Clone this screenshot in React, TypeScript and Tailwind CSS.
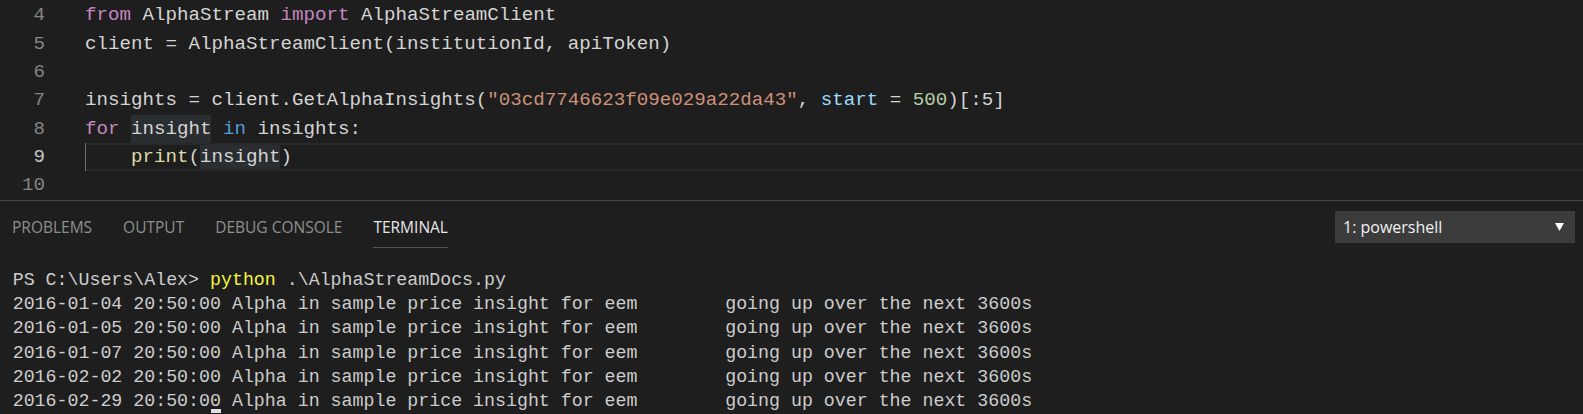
import React from 'react';

const MONO = "font-['Liberation_Mono','DejaVu_Sans_Mono',monospace]";
const UI = "font-['Open_Sans','Noto_Sans',sans-serif]";

const kw = 'text-[#c586c0]';
const blue = 'text-[#569cd6]';
const str = 'text-[#ce9178]';
const param = 'text-[#9cdcfe]';
const num = 'text-[#b5cea8]';
const fn = 'text-[#dcdcaa]';
const hl = 'bg-[#2b2e31]';

type Line = { n: number; body: React.ReactNode; active?: boolean };

const LINES: Line[] = [
  {
    n: 4,
    body: (
      <>
        <span className={kw}>from</span> AlphaStream <span className={kw}>import</span> AlphaStreamClient
      </>
    ),
  },
  { n: 5, body: <>client = AlphaStreamClient(institutionId, apiToken)</> },
  { n: 6, body: null },
  {
    n: 7,
    body: (
      <>
        insights = client.GetAlphaInsights(<span className={str}>"03cd7746623f09e029a22da43"</span>,{' '}
        <span className={param}>start</span> = <span className={num}>500</span>)[:5]
      </>
    ),
  },
  {
    n: 8,
    body: (
      <>
        <span className={kw}>for</span> <span className={`${hl} inline-block h-[28.33px]`}>insight</span>{' '}
        <span className={blue}>in</span> insights:
      </>
    ),
  },
  {
    n: 9,
    active: true,
    body: (
      <>
        {'    '}
        <span className={fn}>print</span>(<span className={`${hl} inline-block h-[24.33px] leading-[24.33px]`}>insight</span>)
      </>
    ),
  },
  { n: 10, body: null },
];

const OUTPUT_ROWS = ['2016-01-04', '2016-01-05', '2016-01-07', '2016-02-02', '2016-02-29'];

export default function App() {
  return (
    <div className="w-[1583px] h-[414px] bg-[#1e1e1e] overflow-hidden flex flex-col">
      {/* Editor */}
      <div className={`h-[200px] pt-[1.33px] overflow-hidden text-[19.17px] text-[#d4d4d4] ${MONO}`}>
        {LINES.map(line => (
          <div key={line.n} className="flex h-[28.33px] leading-[28.33px]">
            <span
              className={`w-[45px] text-right flex-shrink-0 ${line.active ? 'text-[#c6c6c6]' : 'text-[#858585]'}`}
            >
              {line.n}
            </span>
            <div className="w-[40px] flex-shrink-0" />
            {line.active ? (
              <div className="relative flex-1 border-y-2 border-[#282828] leading-[24.33px] whitespace-pre">
                <div className="absolute left-0 top-[-2px] bottom-[-2px] w-px bg-[#707070]" />
                {line.body}
              </div>
            ) : (
              <div className="flex-1 whitespace-pre">{line.body}</div>
            )}
          </div>
        ))}
      </div>

      {/* Panel */}
      <div className="flex-1 border-t border-[#444444] flex flex-col">
        <div className="h-[48px] flex items-start justify-between pr-[8px]">
          <div className={`flex gap-[31px] pl-[12px] text-[15.5px] uppercase ${UI}`}>
            {['Problems', 'Output', 'Debug Console', 'Terminal'].map(tab => (
              <div key={tab} className="flex flex-col">
                <span
                  className={`pt-[15px] h-[46px] leading-[22px] ${tab === 'Terminal' ? 'text-[#e7e7e7]' : 'text-[#8f8f8f]'}`}
                >
                  {tab}
                </span>
                {tab === 'Terminal' && <div className="h-[1px] bg-[#555555]" />}
              </div>
            ))}
          </div>
          <div className={`mt-[10px] w-[240px] h-[32px] bg-[#3c3c3c] flex items-center justify-between pl-[8px] pr-[11px] text-[16px] text-[#f0f0f0] ${UI}`}>
            <span>1: powershell</span>
            <svg width="9" height="8" viewBox="0 0 9 8">
              <polygon points="0,0 9,0 4.5,8" fill="#ffffff" />
            </svg>
          </div>
        </div>

        <div className={`pt-[19px] pl-[12.7px] text-[18.28px] leading-[24.2px] text-[#cccccc] whitespace-pre ${MONO}`}>
          <div>
            PS C:\Users\Alex&gt; <span className="text-[#f5f543]">python</span> .\AlphaStreamDocs.py
          </div>
          {OUTPUT_ROWS.map(d => (
            <div key={d}>
              {d} 20:50:00 Alpha in sample price insight for eem        going up over the next 3600s
            </div>
          ))}
          <div className="h-[4px] w-[10px] ml-[198px] bg-[#e0e0e0] mt-[-4px]" />
        </div>
      </div>
    </div>
  );
}
